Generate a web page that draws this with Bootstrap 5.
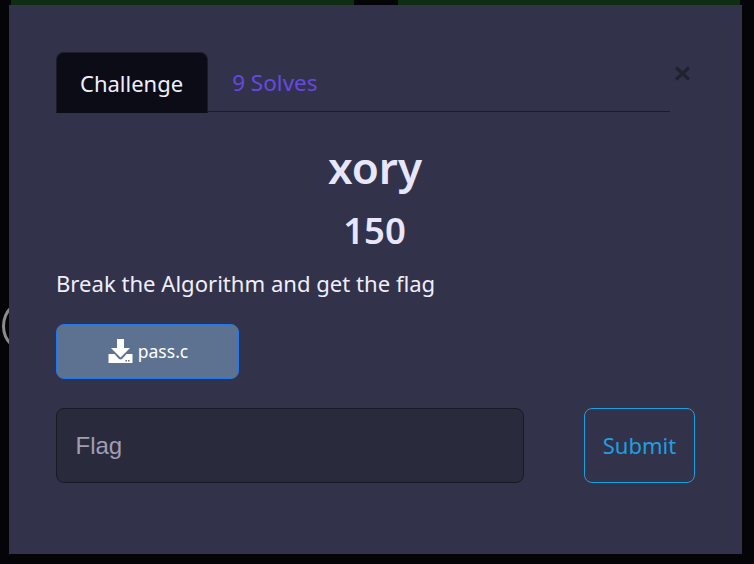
<!DOCTYPE html>
<html lang="en">
<head>
<meta charset="utf-8">
<title>xory</title>
<link rel="stylesheet" href="https://cdn.jsdelivr.net/npm/bootstrap@5.3.0/dist/css/bootstrap.min.css">
<style>
html,body{height:564px;overflow:hidden}
body{background:#050509;font-family:"Noto Sans","Open Sans",sans-serif;color:#e8e6fb;position:relative}
.top-strip{height:5px;padding:0 14px 0 11px;gap:44px}
.top-strip span{flex:1;background:#0f2d12}
.ring-behind{position:absolute;left:2px;top:298px;width:56px;height:56px;border:3px solid #8b8b8f;border-radius:50%}
.dialog-box{position:relative;width:733px;height:549px;margin-left:9px;background:#32324a;padding:47px 47px 0}
.tabs-row{width:614px;height:60px;border-bottom:1px solid #1c1c2a}
.tabs-row .nav-link{height:61px;padding:0 24px 0 23px;font-size:22px;line-height:60px;color:#6549e0;border:1px solid transparent;border-radius:8px 8px 0 0;margin:0}
.tabs-row .nav-link:not(.active){font-size:22.5px}
.tabs-row .nav-link.active{background:#0c0c17;color:#eef0ff;border-color:#1c1c2a #1c1c2a #0c0c17}
.close-x{position:absolute;left:665px;top:60px;padding:0;border:0;background:none;line-height:0}
.chal-name{font-size:44px;font-weight:600;line-height:54px;margin:28px 0 0;color:#e8e6fb;padding-right:1px}
.chal-value{font-size:36.5px;font-weight:600;line-height:46px;margin:13px 0 0;color:#e8e6fb;padding-right:2px}
.chal-desc{font-size:22.1px;line-height:30px;margin:15px 0 0;color:#f0eefc}
.file-btn{width:183px;height:55px;margin-top:26px;background:#5d7290;border:1px solid #1f78f0;border-radius:8px;color:#fff;font-size:17.5px;gap:5px}
.file-btn svg{margin-left:1px}
.file-btn:hover{background:#5d7290;color:#fff;border-color:#1f78f0}
.flag-row{margin-top:29px}
.flag-field{width:468px;height:75px;background:#2a2a3d;border:1px solid #191926;border-radius:8px;padding:0 18.5px;font-family:"Liberation Sans",sans-serif;font-size:24px;color:#e8e6fb}
.flag-field:focus{background:#2a2a3d;border-color:#191926;box-shadow:none;color:#e8e6fb}
.flag-field::placeholder{color:#a09db4;opacity:1}
.send-btn{width:111px;height:75px;margin-left:60px;padding:0;border:1px solid #14a3e0;border-radius:8px;background:transparent;color:#1f9fe0;font-size:22px}
</style>
</head>
<body>
<div class="top-strip d-flex"><span></span><span></span></div>
<div class="ring-behind"></div>
<div class="dialog-box">
  <ul class="nav tabs-row">
    <li class="nav-item"><a class="nav-link active" href="#">Challenge</a></li>
    <li class="nav-item"><a class="nav-link" href="#">9 Solves</a></li>
  </ul>
  <button class="close-x" type="button" aria-label="Close">
    <svg width="17" height="17" viewBox="0 0 17 17" aria-hidden="true"><path d="M2 2.5 15 14.5M15 2.5 2 14.5" stroke="#22222f" stroke-width="3.2" fill="none"/></svg>
  </button>
  <h2 class="chal-name text-center">xory</h2>
  <h3 class="chal-value text-center">150</h3>
  <p class="chal-desc">Break the Algorithm and get the flag</p>
  <a class="btn file-btn d-flex align-items-center justify-content-center" href="#">
    <svg width="25" height="25" viewBox="0 0 25 25" aria-hidden="true"><path fill="#fff" d="M9 0h7v9h6l-9.5 9.5L3 9h6z"/><path fill="#fff" d="M0.5 15h6l4 4.5a3 3 0 0 0 4 0l4-4.5h6v9h-24z"/><path fill="#5d7290" d="M17.5 21h1.5v1.5h-1.5zM20 21h1.5v1.5H20z"/></svg>
    <span>pass.c</span>
  </a>
  <div class="flag-row d-flex">
    <input class="form-control flag-field" type="text" placeholder="Flag">
    <button class="btn send-btn" type="button">Submit</button>
  </div>
</div>
</body>
</html>
